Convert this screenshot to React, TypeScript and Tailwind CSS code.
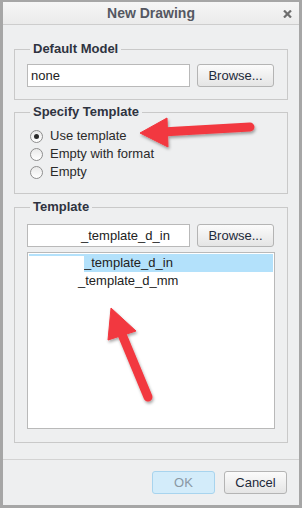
import React from 'react';

const font = { fontFamily: '"Liberation Sans", Arial, sans-serif' };

function Radio({ checked, label }: { checked?: boolean; label: string }) {
  return (
    <label className="flex items-center h-[18px] gap-[7px] text-[13px] text-[#2a2a2a]">
      <span className="w-[13px] h-[13px] rounded-full border border-[#8e8e8e] bg-gradient-to-b from-[#e9e9e9] to-[#ffffff] flex items-center justify-center">
        {checked && <span className="w-[5px] h-[5px] rounded-full bg-[#2b2b2b]" />}
      </span>
      {label}
    </label>
  );
}

function Button({ children, disabled, className = '' }: { children: React.ReactNode; disabled?: boolean; className?: string }) {
  const look = disabled
    ? 'bg-[#d3ecfa] border-[#a8d4ee] text-[#8a98a4]'
    : 'bg-gradient-to-b from-[#fbfbfb] to-[#e5e5e5] border-[#b4b4b4] text-[#1e2a3a]';
  return (
    <button className={`h-[23px] rounded-[3px] border text-[13px] leading-none ${look} ${className}`}>
      {children}
    </button>
  );
}

function Group({ title, className = '', legend = 'ml-[3px]', children }: { title: string; className?: string; legend?: string; children: React.ReactNode }) {
  return (
    <fieldset className={`mx-[11px] border border-[#c9c9c9] px-[12px] pb-[12px] ${className}`}>
      <legend className={`px-[3px] h-[16px] leading-[16px] text-[13px] font-bold text-[#2f3340] ${legend}`}>{title}</legend>
      {children}
    </fieldset>
  );
}

function Arrows() {
  return (
    <svg className="absolute -left-[3px] -top-[2px] pointer-events-none" width="302" height="508">
      <defs>
        <filter id="sh" x="-20%" y="-20%" width="140%" height="140%">
          <feDropShadow dx="1" dy="2" stdDeviation="1.6" floodColor="#000" floodOpacity="0.35" />
        </filter>
      </defs>
      <g fill="#f2383f" stroke="#f2383f" filter="url(#sh)">
        <line x1="250" y1="127" x2="162" y2="132" strokeWidth="9" strokeLinecap="round" />
        <polygon points="140,133 167,118 168,147" strokeWidth="1" strokeLinejoin="round" />
        <line x1="148" y1="397" x2="121" y2="332" strokeWidth="9" strokeLinecap="round" />
        <polygon points="111,308 108,340 136,331" strokeWidth="1" strokeLinejoin="round" />
      </g>
    </svg>
  );
}

export default function App() {
  return (
    <div style={font} className="relative w-[302px] h-[508px] border-[3px] border-t-2 border-[#a6a6a6] bg-[#eeeff0] flex flex-col">
      <div className="relative h-[23px] border-b border-[#cdcdcd] bg-gradient-to-b from-[#f6f6f6] to-[#ebebeb] flex items-center justify-center">
        <span className="text-[14px] font-bold text-[#555862]">New Drawing</span>
        <svg className="absolute right-[7px] top-[8px]" width="9" height="8" viewBox="0 0 9 8">
          <path d="M1 0.5 L8 7.5 M8 0.5 L1 7.5" stroke="#6e6e6e" strokeWidth="2.2" />
        </svg>
      </div>

      <Group title="Default Model" className="mt-[16px]">
        <div className="flex gap-[7px] pt-[7px]">
          <div className="w-[163px] h-[23px] bg-white border border-[#b9b9b9] px-[3px] text-[13px] leading-[21px] text-[#222]">none</div>
          <Button className="w-[77px]">Browse...</Button>
        </div>
      </Group>

      <Group title="Specify Template" className="mt-[4px] pl-[15px]" legend="ml-0">
        <div className="pt-[7px] flex flex-col">
          <Radio checked label="Use template" />
          <Radio label="Empty with format" />
          <Radio label="Empty" />
        </div>
      </Group>

      <Group title="Template" className="mt-[5px] pb-[13px]">
        <div className="flex gap-[7px] pt-[9px]">
          <div className="w-[163px] h-[23px] bg-white border border-[#b9b9b9] pl-[53px] text-[13px] leading-[21px] text-[#222]">_template_d_in</div>
          <Button className="w-[77px]">Browse...</Button>
        </div>
        <div className="mt-[5px] h-[177px] bg-white border border-[#b9b9b9] p-px text-[13px] text-[#222]">
          <div className="relative h-[18px] bg-[#b3e1fb] pl-[55px] leading-[18px]">
            <span className="absolute left-0 top-[2px] w-[55px] h-[16px] bg-white" />
            _template_d_in
          </div>
          <div className="h-[18px] pl-[49px] leading-[18px]">_template_d_mm</div>
        </div>
      </Group>

      <div className="mt-auto border-t border-[#d3d3d3] flex justify-end gap-[9px] pt-[11px] pb-[11px] pr-[12px]">
        <Button disabled className="w-[63px]">OK</Button>
        <Button className="w-[63px]">Cancel</Button>
      </div>

      <Arrows />
    </div>
  );
}
